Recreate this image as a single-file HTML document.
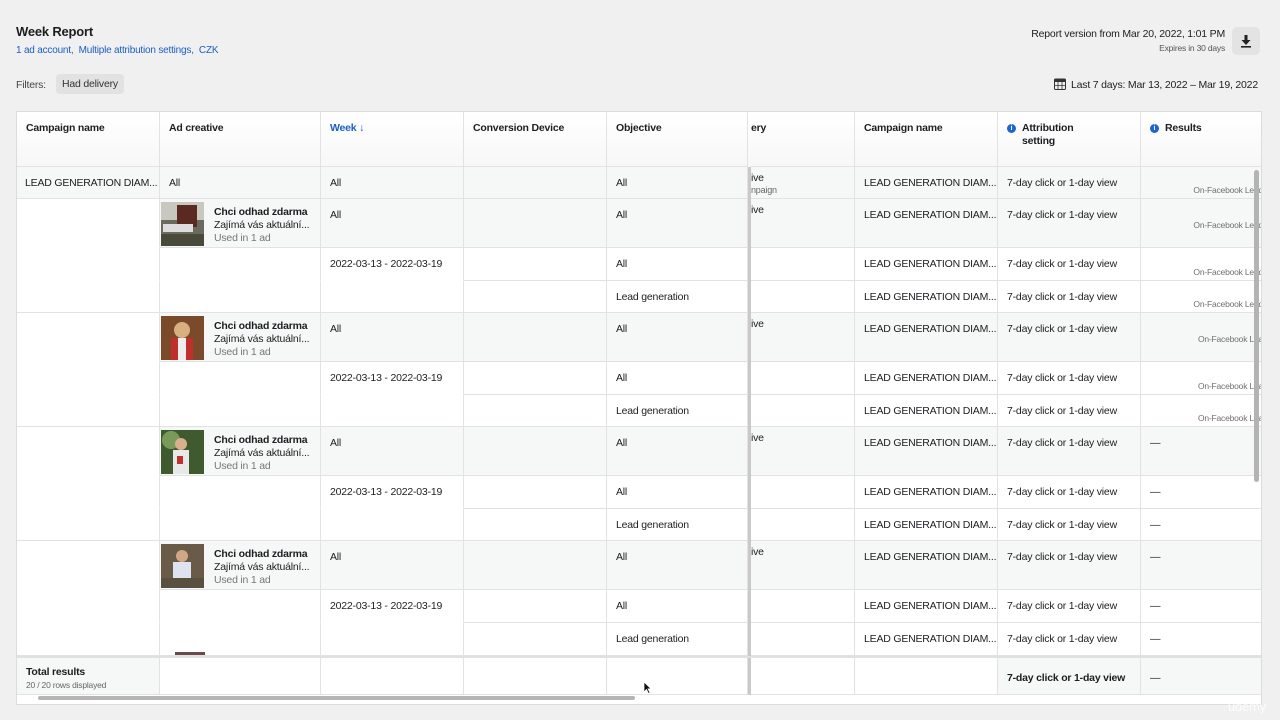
<!DOCTYPE html>
<html><head><meta charset="utf-8"><style>
*{box-sizing:border-box;margin:0;padding:0}
body{width:1280px;height:720px;background:#f0f0f0;font-family:"Liberation Sans",Arial,sans-serif;color:#1c1e21;position:relative;overflow:hidden;font-size:10.5px;letter-spacing:-0.2px}
.a{position:absolute;white-space:nowrap}
.tbl{position:absolute;left:16px;top:111px;width:1246px;height:594px;background:#fff;border:1px solid #dcdcdc;overflow:hidden}
.row{display:flex;width:1246px}
.c{border-right:1px solid #e2e2e2;border-bottom:1px solid #e2e2e2;padding:10px 9px 0;overflow:hidden;white-space:nowrap;line-height:13px;position:relative}
.nb{border-bottom-color:transparent}
.g{background:#f6f7f7}
.w0{width:143px}.w1{width:161px}.w2{width:143px}.w3{width:143px}.w4{width:141px}.dv{width:3px;background:#c9c9c9;border:none;padding:0}.w5{width:104px}.w6{width:143px}.w7{width:143px}.w8{width:122px;border-right:none}
.hd .c{font-weight:bold;padding-top:10px;background:linear-gradient(#fff,#f7f7f7)}
.res{color:#707070;font-size:8.5px;text-align:right;padding-right:0}
.thumb{position:absolute;left:1px;top:3px;width:43px;height:44px}
.cr{padding-left:54px;padding-top:7px;line-height:13px}
.info{display:inline-block;width:9px;height:9px;border-radius:50%;background:#1a66d2;color:#fff;font-size:7px;text-align:center;line-height:9px;margin-right:6px;vertical-align:1px;letter-spacing:0}
</style></head><body>
<div class="a" style="left:16px;top:24px;font-size:13px;font-weight:bold">Week Report</div>
<div class="a" style="left:16px;top:45px;color:#1a5fc4;font-size:10px">1 ad account,&nbsp; Multiple attribution settings,&nbsp; CZK</div>
<div class="a" style="left:16px;top:79px;color:#444">Filters:</div>
<div class="a" style="left:56px;top:74px;background:#e2e2e2;border-radius:4px;padding:4px 6px;color:#333">Had delivery</div>
<div class="a" style="right:55px;top:28px;font-size:10.5px">Report version from Mar 20, 2022, 1:01 PM</div>
<div class="a" style="right:55px;top:43px;font-size:8.5px;color:#555">Expires in 30 days</div>
<div class="a" style="left:1232px;top:27px;width:28px;height:28px;background:#e3e3e3;border-radius:5px">
<svg width="28" height="28" viewBox="0 0 28 28"><path d="M12.5 8h3v5h3l-4.5 5-4.5-5h3z" fill="#222"/><rect x="9" y="19" width="10" height="1.6" fill="#222"/></svg></div>
<div class="a" style="left:1054px;top:78px"><svg width="12" height="12" viewBox="0 0 12 12"><rect x=".5" y="1" width="11" height="10.5" rx="1" fill="none" stroke="#333"/><rect x=".5" y="1" width="11" height="3" fill="#333"/><path d="M4 4v7M8 4v7M1 7.5h10" stroke="#333" stroke-width=".8"/></svg></div>
<div class="a" style="left:1071px;top:79px;font-size:10.5px">Last 7 days: Mar 13, 2022 – Mar 19, 2022</div>

<div class="tbl">
<div class="row hd" style="height:55px">
<div class="c w0">Campaign name</div><div class="c w1">Ad creative</div><div class="c w2" style="color:#1a5fc4">Week ↓</div><div class="c w3">Conversion Device</div><div class="c w4">Objective</div><div class="c dv"></div><div class="c w5" style="padding-left:0">ery</div><div class="c w6">Campaign name</div><div class="c w7"><span class="info">i</span>Attribution<br><span style="padding-left:15px">setting</span></div><div class="c w8"><span class="info">i</span>Results</div>
</div>
<div class="row" style="height:32px">
<div class="c w0 g" style="padding-left:8px">LEAD GENERATION DIAM...</div><div class="c w1 g">All</div><div class="c w2 g">All</div><div class="c w3 g"></div><div class="c w4 g">All</div><div class="c dv"></div><div class="c w5 g" style="padding:5px 0 0;line-height:12px">ive<br><span style="font-size:9px;color:#666">npaign</span></div><div class="c w6 g">LEAD GENERATION DIAM...</div><div class="c w7 g">7-day click or 1-day view</div><div class="c w8 g res" style="padding-top:17px">On-Facebook Lead</div>
</div>

<div class="row" style="height:49px">
<div class="c w0 nb"></div><div class="c w1 g cr"><svg class="thumb" viewBox="0 0 43 44"><rect width="43" height="44" fill="#6b6a5e"/><rect y="0" width="43" height="18" fill="#c8c8c0"/><rect x="16" y="3" width="20" height="22" fill="#5a2a22"/><rect x="2" y="22" width="30" height="8" fill="#ddd"/><rect y="32" width="43" height="12" fill="#4a4a3a"/></svg><b>Chci odhad zdarma</b><br>Zajímá vás aktuální...<br><span style="color:#777">Used in 1 ad</span></div><div class="c w2 g">All</div><div class="c w3 g"></div><div class="c w4 g">All</div><div class="c dv"></div><div class="c w5 g" style="padding-left:0;padding-top:5px">ive</div><div class="c w6 g">LEAD GENERATION DIAM...</div><div class="c w7 g">7-day click or 1-day view</div><div class="c w8 g res" style="padding-top:20px">On-Facebook Lead</div>
</div>
<div class="row" style="height:33px">
<div class="c w0 nb"></div><div class="c w1 nb"></div><div class="c w2 nb">2022-03-13 - 2022-03-19</div><div class="c w3"></div><div class="c w4">All</div><div class="c dv"></div><div class="c w5"></div><div class="c w6">LEAD GENERATION DIAM...</div><div class="c w7">7-day click or 1-day view</div><div class="c w8 res" style="padding-top:18px">On-Facebook Lead</div>
</div>
<div class="row" style="height:32px">
<div class="c w0"></div><div class="c w1"></div><div class="c w2"></div><div class="c w3"></div><div class="c w4">Lead generation</div><div class="c dv"></div><div class="c w5"></div><div class="c w6">LEAD GENERATION DIAM...</div><div class="c w7">7-day click or 1-day view</div><div class="c w8 res" style="padding-top:17px">On-Facebook Lead</div>
</div>

<div class="row" style="height:49px">
<div class="c w0 nb"></div><div class="c w1 g cr"><svg class="thumb" viewBox="0 0 43 44"><rect width="43" height="44" fill="#7a4a2a"/><circle cx="21" cy="14" r="8" fill="#d8b080"/><rect x="10" y="22" width="22" height="22" fill="#c0302a"/><rect x="17" y="22" width="8" height="22" fill="#eee"/></svg><b>Chci odhad zdarma</b><br>Zajímá vás aktuální...<br><span style="color:#777">Used in 1 ad</span></div><div class="c w2 g">All</div><div class="c w3 g"></div><div class="c w4 g">All</div><div class="c dv"></div><div class="c w5 g" style="padding-left:0;padding-top:5px">ive</div><div class="c w6 g">LEAD GENERATION DIAM...</div><div class="c w7 g">7-day click or 1-day view</div><div class="c w8 g res" style="padding-top:20px">On-Facebook Lea</div>
</div>
<div class="row" style="height:33px">
<div class="c w0 nb"></div><div class="c w1 nb"></div><div class="c w2 nb">2022-03-13 - 2022-03-19</div><div class="c w3"></div><div class="c w4">All</div><div class="c dv"></div><div class="c w5"></div><div class="c w6">LEAD GENERATION DIAM...</div><div class="c w7">7-day click or 1-day view</div><div class="c w8 res" style="padding-top:18px">On-Facebook Lea</div>
</div>
<div class="row" style="height:32px">
<div class="c w0"></div><div class="c w1"></div><div class="c w2"></div><div class="c w3"></div><div class="c w4">Lead generation</div><div class="c dv"></div><div class="c w5"></div><div class="c w6">LEAD GENERATION DIAM...</div><div class="c w7">7-day click or 1-day view</div><div class="c w8 res" style="padding-top:17px">On-Facebook Lea</div>
</div>

<div class="row" style="height:49px">
<div class="c w0 nb"></div><div class="c w1 g cr"><svg class="thumb" viewBox="0 0 43 44"><rect width="43" height="44" fill="#3f5a2e"/><circle cx="10" cy="10" r="9" fill="#7a9a5a"/><circle cx="20" cy="14" r="6" fill="#d8b090"/><rect x="12" y="20" width="16" height="24" fill="#e8e8e8"/><rect x="16" y="26" width="6" height="8" fill="#c03030"/></svg><b>Chci odhad zdarma</b><br>Zajímá vás aktuální...<br><span style="color:#777">Used in 1 ad</span></div><div class="c w2 g">All</div><div class="c w3 g"></div><div class="c w4 g">All</div><div class="c dv"></div><div class="c w5 g" style="padding-left:0;padding-top:5px">ive</div><div class="c w6 g">LEAD GENERATION DIAM...</div><div class="c w7 g">7-day click or 1-day view</div><div class="c w8 g">—</div>
</div>
<div class="row" style="height:33px">
<div class="c w0 nb"></div><div class="c w1 nb"></div><div class="c w2 nb">2022-03-13 - 2022-03-19</div><div class="c w3"></div><div class="c w4">All</div><div class="c dv"></div><div class="c w5"></div><div class="c w6">LEAD GENERATION DIAM...</div><div class="c w7">7-day click or 1-day view</div><div class="c w8">—</div>
</div>
<div class="row" style="height:32px">
<div class="c w0"></div><div class="c w1"></div><div class="c w2"></div><div class="c w3"></div><div class="c w4">Lead generation</div><div class="c dv"></div><div class="c w5"></div><div class="c w6">LEAD GENERATION DIAM...</div><div class="c w7">7-day click or 1-day view</div><div class="c w8">—</div>
</div>

<div class="row" style="height:49px">
<div class="c w0 nb"></div><div class="c w1 g cr"><svg class="thumb" viewBox="0 0 43 44"><rect width="43" height="44" fill="#6a5a48"/><circle cx="21" cy="12" r="6" fill="#d0a888"/><rect x="12" y="18" width="18" height="26" fill="#dde4f0"/><rect y="34" width="43" height="10" fill="#5a5040"/></svg><b>Chci odhad zdarma</b><br>Zajímá vás aktuální...<br><span style="color:#777">Used in 1 ad</span></div><div class="c w2 g">All</div><div class="c w3 g"></div><div class="c w4 g">All</div><div class="c dv"></div><div class="c w5 g" style="padding-left:0;padding-top:5px">ive</div><div class="c w6 g">LEAD GENERATION DIAM...</div><div class="c w7 g">7-day click or 1-day view</div><div class="c w8 g">—</div>
</div>
<div class="row" style="height:33px">
<div class="c w0 nb"></div><div class="c w1 nb"></div><div class="c w2 nb">2022-03-13 - 2022-03-19</div><div class="c w3"></div><div class="c w4">All</div><div class="c dv"></div><div class="c w5"></div><div class="c w6">LEAD GENERATION DIAM...</div><div class="c w7">7-day click or 1-day view</div><div class="c w8">—</div>
</div>
<div class="row" style="height:33px">
<div class="c w0"></div><div class="c w1"><div style="position:absolute;left:15px;bottom:0;width:30px;height:3px;background:#6a4a4a"></div></div><div class="c w2"></div><div class="c w3"></div><div class="c w4">Lead generation</div><div class="c dv"></div><div class="c w5"></div><div class="c w6">LEAD GENERATION DIAM...</div><div class="c w7">7-day click or 1-day view</div><div class="c w8">—</div>
</div>
<div class="row" style="height:39px;border-top:2px solid #e0e0e0">
<div class="c w0 g" style="padding-top:8px"><b>Total results</b><br><span style="font-size:8.5px;color:#666">20 / 20 rows displayed</span></div><div class="c w1"></div><div class="c w2"></div><div class="c w3"></div><div class="c w4"></div><div class="c dv"></div><div class="c w5"></div><div class="c w6"></div><div class="c w7 g" style="padding-top:14px;font-weight:bold">7-day click or 1-day view</div><div class="c w8 g" style="padding-top:14px">—</div>
</div>
</div>
<div class="a" style="left:38px;top:696px;width:597px;height:4px;border-radius:2px;background:#b5b5b5"></div>
<div class="a" style="left:1254px;top:170px;width:5px;height:312px;border-radius:3px;background:#b3b3b3"></div>
<div class="a" style="left:1228px;top:699px;color:#fff;font-size:13px;opacity:.8">ūdemy</div>
<svg class="a" style="left:643px;top:681px" width="8" height="13" viewBox="0 0 8 13"><path d="M1 1v10l2.5-2.5 2 4 1.5-.7-2-4H8z" fill="#111" stroke="#fff" stroke-width=".7"/></svg>
</body></html>
